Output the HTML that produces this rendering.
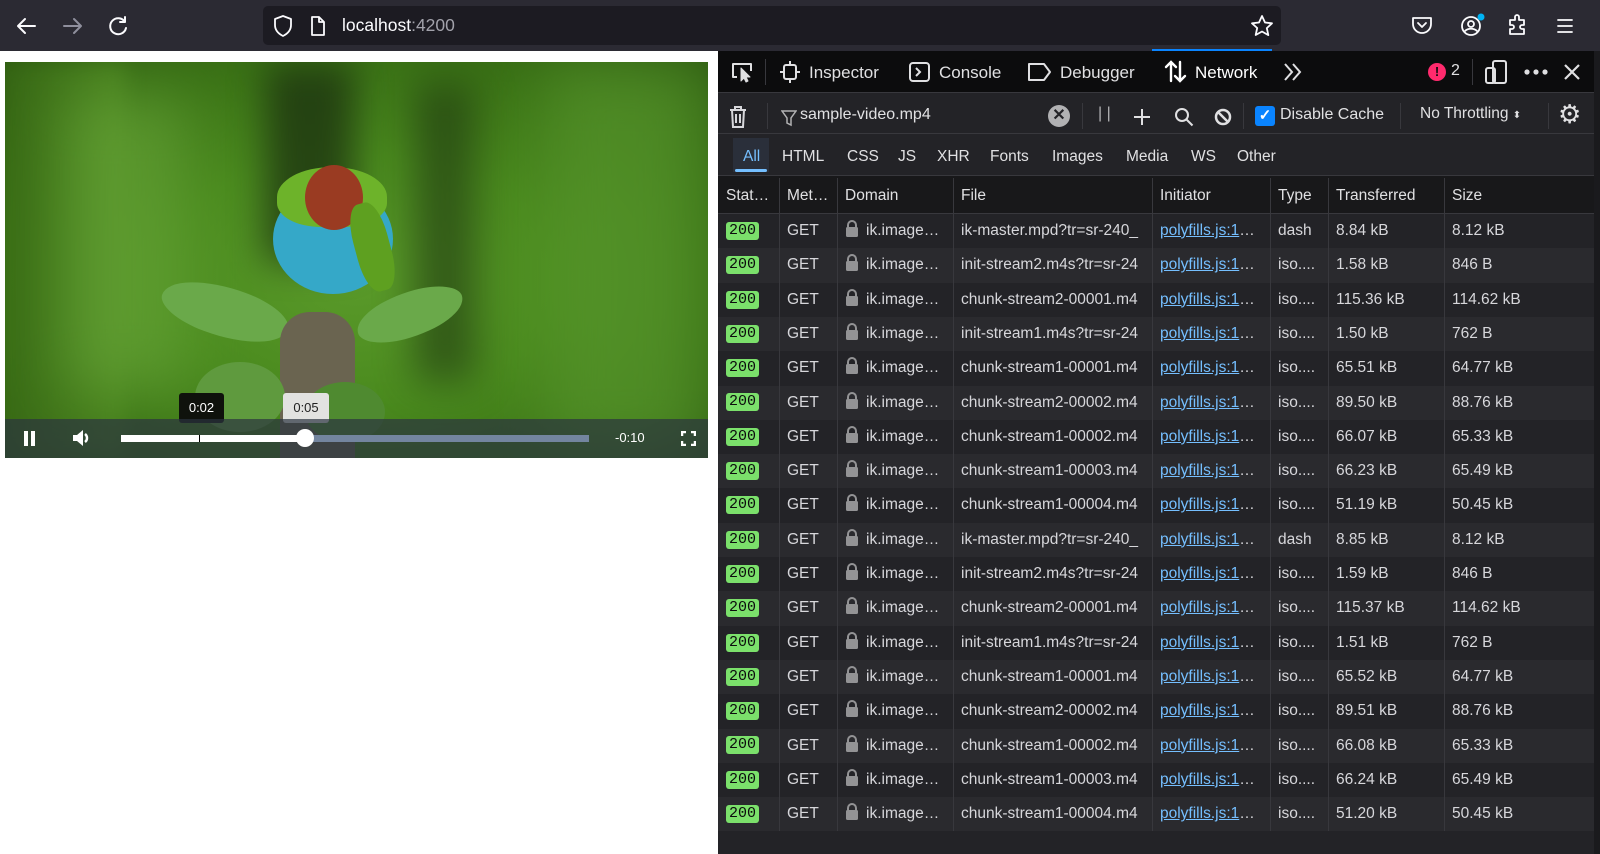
<!DOCTYPE html>
<html><head><meta charset="utf-8"><style>
*{box-sizing:border-box;margin:0;padding:0}
body{width:1600px;height:854px;overflow:hidden;background:#fff;font-family:"Liberation Sans",sans-serif;position:relative}
.a{position:absolute}
.top{left:0;top:0;width:1600px;height:51px;background:#2b2a33}
.url{left:263px;top:6px;width:1018px;height:39px;background:#1c1b22;border-radius:5px}
.dt{left:718px;top:51px;width:882px;height:803px;background:#232327;color:#e0e0e2;font-size:15.5px}
.t{position:absolute;white-space:nowrap}
.row{position:absolute;left:0;width:876px;height:34.3px}
.cell{position:absolute;top:0;height:100%;line-height:34px;white-space:nowrap;overflow:hidden;padding-left:8px;color:#d7d7db}
.badge{display:inline-block;background:#7be06b;color:#0c0c0d;font-family:"Liberation Mono",monospace;font-size:15px;line-height:18px;padding:0 3px;border-radius:3px;vertical-align:middle}
.lnk{color:#75bfff;text-decoration:underline}
.vl{position:absolute;top:0;width:1px;background:#38383d}
</style></head><body>
<div class="a top"></div>
<svg class="a" style="left:14px;top:14px" width="120" height="24" fill="none" stroke-width="2" stroke-linecap="round" stroke-linejoin="round">
<path d="M21 12H4M11 5l-7 7 7 7" stroke="#fbfbfe"/>
<path d="M50 12h17M60 5l7 7-7 7" stroke="#8f8f9d"/>
<path d="M111 8a8 8 0 1 0 1 6M111 3v5h-5" stroke="#fbfbfe"/>
</svg>
<div class="a url"></div>
<svg class="a" style="left:272px;top:14px" width="60" height="24" fill="none" stroke="#fbfbfe" stroke-width="1.8" stroke-linejoin="round">
<path d="M11 2l8 3v6c0 6-4 9-8 11-4-2-8-5-8-11V5z"/>
<path d="M40 3h7l5 5v13H40z M47 3v5h5"/>
</svg>
<div class="a" style="left:342px;top:15px;font-size:17.5px;color:#fbfbfe">localhost<span style="color:#a2a2ab">:4200</span></div>
<svg class="a" style="left:1250px;top:14px" width="24" height="24" fill="none" stroke="#fbfbfe" stroke-width="1.8" stroke-linejoin="round"><path d="M12 2l3 6.5 7 .8-5.2 4.8 1.5 7L12 17.5 5.7 21l1.5-7L2 9.3l7-.8z"/></svg>
<svg class="a" style="left:1410px;top:12px" width="180" height="28" fill="none" stroke="#fbfbfe" stroke-width="1.8" stroke-linecap="round" stroke-linejoin="round">
<path d="M3 6h18v6a9 9 0 0 1-18 0z M8 11l4 4 4-4"/>
<circle cx="61" cy="14" r="9"/><circle cx="61" cy="12" r="3"/><path d="M55 19c3-3 9-3 12 0"/>
<circle cx="71" cy="5" r="3.5" fill="#00b3f4" stroke="none"/>
<path d="M100 9h5V6a2 2 0 0 1 4 0v3h5v5h-2a2 2 0 0 0 0 4h2v5h-14v-5h2a2 2 0 0 0 0-4h-2z" transform="translate(0,-1)"/>
<path d="M148 8h14M148 14h14M148 20h14"/>
</svg>
<div class="a" style="left:1152px;top:49px;width:120px;height:3px;background:#0a84ff"></div>

<div class="a" style="left:5px;top:62px;width:703px;height:396px;overflow:hidden;background:radial-gradient(ellipse at 50% 55%,#5a9a2a 0%,#4a8a1e 40%,#3b7316 70%,#2f5d12 100%)">
<div class="a" style="left:0;top:0;width:120px;height:396px;background:linear-gradient(90deg,#3a6a16,#4f8a22);opacity:.7;filter:blur(10px)"></div>
<div class="a" style="left:260px;top:0;width:90px;height:200px;background:#1d3410;filter:blur(18px);opacity:.8"></div>
<div class="a" style="left:410px;top:20px;width:60px;height:300px;background:#1d3410;filter:blur(20px);opacity:.6"></div>
<div class="a" style="left:60px;top:30px;width:120px;height:300px;background:#6aa83a;filter:blur(30px);opacity:.6"></div>
<div class="a" style="left:540px;top:0;width:160px;height:396px;background:#5a9a2e;filter:blur(30px);opacity:.6"></div>
<div class="a" style="left:155px;top:225px;width:130px;height:50px;background:#6aa94a;border-radius:60% 40% 60% 40%;transform:rotate(20deg)"></div>
<div class="a" style="left:350px;top:230px;width:110px;height:45px;background:#6aa94a;border-radius:60% 40% 60% 40%;transform:rotate(-15deg)"></div>
<div class="a" style="left:275px;top:250px;width:75px;height:146px;background:#6a6450;border-radius:30px 30px 0 0"></div>
<div class="a" style="left:190px;top:300px;width:90px;height:70px;background:#5f9a3e;border-radius:50%"></div>
<div class="a" style="left:300px;top:320px;width:80px;height:60px;background:#4f8a30;border-radius:50%"></div>
<div class="a" style="left:268px;top:122px;width:120px;height:110px;background:#35a8c8;border-radius:50%"></div>
<div class="a" style="left:272px;top:105px;width:110px;height:60px;background:#6db32a;border-radius:50% 50% 40% 40%"></div>
<div class="a" style="left:300px;top:103px;width:58px;height:65px;background:#9a3b22;border-radius:50%"></div>
<div class="a" style="left:350px;top:140px;width:35px;height:90px;background:#5ea020;border-radius:40%;transform:rotate(-15deg)"></div>
<div class="a" style="left:174px;top:331px;width:45px;height:30px;background:#0f120c;border-radius:3px;color:#fff;font-size:13px;text-align:center;line-height:30px">0:02</div>
<div class="a" style="left:278px;top:331px;width:46px;height:30px;background:#e2e2e0;border-radius:3px;color:#222;font-size:13px;text-align:center;line-height:30px">0:05</div>
<div class="a" style="left:0;top:357px;width:703px;height:39px;background:rgba(43,51,63,.7)"></div>
<div class="a" style="left:19px;top:369px;width:4px;height:15px;background:#fff"></div>
<div class="a" style="left:26px;top:369px;width:4px;height:15px;background:#fff"></div>
<svg class="a" style="left:66px;top:366px" width="22" height="20"><path d="M2 7h4l6-5v16l-6-5H2z" fill="#fff"/><path d="M14 6a5 5 0 0 1 0 8" stroke="#fff" stroke-width="2.5" fill="none"/></svg>
<div class="a" style="left:116px;top:373px;width:468px;height:7px;background:#73859f"></div>
<div class="a" style="left:116px;top:373px;width:184px;height:7px;background:#fff"></div>
<div class="a" style="left:194px;top:373px;width:1px;height:7px;background:#000"></div>
<div class="a" style="left:291px;top:367px;width:18px;height:18px;border-radius:50%;background:#fff"></div>
<div class="a" style="left:610px;top:368px;color:#fff;font-size:13px">-0:10</div>
<svg class="a" style="left:676px;top:369px" width="15" height="15" fill="none" stroke="#fff" stroke-width="2.5"><path d="M1 5V1h4M10 1h4v4M14 10v4h-4M5 14H1v-4"/></svg>
</div>

<div class="a dt">
<div class="a" style="left:0;top:0;width:876px;height:42px;background:#0c0c0d;border-bottom:1px solid #38383d"></div>
<div class="a" style="left:876px;top:0;width:6px;height:803px;background:#1a1a1d"></div>
<svg class="a" style="left:10px;top:8px" width="30" height="26" fill="none" stroke="#e0e0e2" stroke-width="2" stroke-linejoin="round">
<path d="M9 18H5V5h18v7"/><path d="M13 9l9 9-4 0 2 4-2 1-2-4-3 3z" fill="#e0e0e2" stroke-width="1"/></svg>
<div class="a" style="left:47px;top:8px;width:1px;height:26px;background:#38383d"></div>
<svg class="a" style="left:59px;top:8px" width="26" height="26" fill="none" stroke="#e0e0e2" stroke-width="2" stroke-linejoin="round">
<rect x="7" y="6" width="12" height="14" rx="2"/><path d="M13 2v4M13 20v4M3 13h4M19 13h4"/></svg>
<div class="t" style="left:91px;top:12px;font-size:17px">Inspector</div>
<svg class="a" style="left:190px;top:9px" width="24" height="24" fill="none" stroke="#e0e0e2" stroke-width="2"><rect x="2" y="3" width="19" height="18" rx="3"/><path d="M8 8l4 4-4 4"/></svg>
<div class="t" style="left:221px;top:12px;font-size:17px">Console</div>
<svg class="a" style="left:309px;top:9px" width="26" height="24" fill="none" stroke="#e0e0e2" stroke-width="2" stroke-linejoin="round"><path d="M2 4h15l6 8-6 8H2z"/></svg>
<div class="t" style="left:342px;top:12px;font-size:17px">Debugger</div>
<svg class="a" style="left:445px;top:8px" width="26" height="26" fill="none" stroke="#fff" stroke-width="2.4" stroke-linecap="round"><path d="M8 22V3M3 8l5-5 5 5M17 3v19M12 17l5 5 5-5"/></svg>
<div class="t" style="left:477px;top:12px;font-size:17px;color:#fff">Network</div>
<svg class="a" style="left:563px;top:10px" width="24" height="22" fill="none" stroke="#e0e0e2" stroke-width="2"><path d="M4 3l7 8-7 8M12 3l7 8-7 8"/></svg>
<div class="a" style="left:710px;top:12px;width:18px;height:18px;border-radius:50%;background:#ff2a6d;color:#0c0c0d;font-weight:bold;font-size:13px;text-align:center;line-height:18px">!</div>
<div class="t" style="left:733px;top:11px;font-size:16px">2</div>
<div class="a" style="left:754px;top:8px;width:1px;height:26px;background:#38383d"></div>
<svg class="a" style="left:766px;top:8px" width="24" height="28" fill="none" stroke="#e0e0e2" stroke-width="2"><rect x="9" y="2" width="13" height="22" rx="2"/><rect x="2" y="9" width="9" height="15" rx="2"/></svg>
<svg class="a" style="left:805px;top:17px" width="28" height="8" fill="#e0e0e2"><circle cx="4" cy="4" r="2.6"/><circle cx="13" cy="4" r="2.6"/><circle cx="22" cy="4" r="2.6"/></svg>
<svg class="a" style="left:845px;top:12px" width="18" height="18" stroke="#e0e0e2" stroke-width="2.2"><path d="M2 2l14 14M16 2L2 16"/></svg>

<div class="a" style="left:0;top:42px;width:876px;height:41px;border-bottom:1px solid #38383d"></div>
<svg class="a" style="left:10px;top:54px" width="20" height="24" fill="none" stroke="#d7d7db" stroke-width="2"><path d="M2 5h16M7 5V2h6v3M4 5l1 17h10l1-17M8 9v9M12 9v9"/></svg>
<div class="a" style="left:49px;top:52px;width:1px;height:26px;background:#38383d"></div>
<svg class="a" style="left:63px;top:58px" width="16" height="18" fill="none" stroke="#b1b1b3" stroke-width="1.5"><path d="M1 2h14l-5 7v7l-4-2V9z"/></svg>
<div class="t" style="left:82px;top:55px;font-size:16px;color:#e0e0e2">sample-video.mp4</div>
<div class="a" style="left:330px;top:54px;width:22px;height:22px;border-radius:50%;background:#b1b1b3;color:#232327;text-align:center;line-height:22px;font-weight:bold;font-size:16px">✕</div>
<div class="a" style="left:364px;top:52px;width:1px;height:26px;background:#38383d"></div>
<div class="t" style="left:380px;top:54px;font-size:16px;color:#b1b1b3">| |</div>
<svg class="a" style="left:414px;top:56px" width="20" height="20" stroke="#e0e0e2" stroke-width="2"><path d="M10 2v16M2 10h16"/></svg>
<svg class="a" style="left:455px;top:55px" width="22" height="22" fill="none" stroke="#e0e0e2" stroke-width="2"><circle cx="9" cy="9" r="6"/><path d="M13.5 13.5l6 6"/></svg>
<svg class="a" style="left:495px;top:56px" width="20" height="20" fill="none" stroke="#e0e0e2" stroke-width="2.5"><circle cx="10" cy="10" r="7"/><path d="M5 5l10 10"/></svg>
<div class="a" style="left:525px;top:52px;width:1px;height:26px;background:#38383d"></div>
<div class="a" style="left:537px;top:55px;width:20px;height:20px;border-radius:3px;background:#0a84ff;color:#fff;font-size:15px;text-align:center;line-height:20px;font-weight:bold">✓</div>
<div class="t" style="left:562px;top:55px;font-size:16px">Disable Cache</div>
<div class="a" style="left:682px;top:52px;width:1px;height:26px;background:#38383d"></div>
<div class="t" style="left:702px;top:54px;font-size:15.5px">No Throttling <span style="font-size:10px">⬍</span></div>
<div class="a" style="left:830px;top:52px;width:1px;height:26px;background:#38383d"></div>
<div class="t" style="left:840px;top:48px;font-size:26px;color:#e0e0e2">⚙</div>

<div class="a" style="left:0;top:83px;width:876px;height:42px;border-bottom:1px solid #38383d"></div>
<div class="a" style="left:15px;top:87px;width:36px;height:34px;background:#2a2f3a"></div>
<div class="a" style="left:17px;top:118px;width:32px;height:3px;background:#75bfff;border-radius:2px"></div>
<div class="t" style="left:25px;top:97px;font-size:15.5px;color:#75bfff">All</div>
<div class="t" style="left:64px;top:97px;font-size:15.5px">HTML</div>
<div class="t" style="left:129px;top:97px;font-size:15.5px">CSS</div>
<div class="t" style="left:180px;top:97px;font-size:15.5px">JS</div>
<div class="t" style="left:219px;top:97px;font-size:15.5px">XHR</div>
<div class="t" style="left:272px;top:97px;font-size:15.5px">Fonts</div>
<div class="t" style="left:334px;top:97px;font-size:15.5px">Images</div>
<div class="t" style="left:408px;top:97px;font-size:15.5px">Media</div>
<div class="t" style="left:473px;top:97px;font-size:15.5px">WS</div>
<div class="t" style="left:519px;top:97px;font-size:15.5px">Other</div>

<div class="a" style="left:0;top:125px;width:876px;height:38px;background:#18181a;border-bottom:1px solid #38383d"></div>
<div id="tbl" class="a" style="left:0;top:127px;width:876px;height:660px"></div>
</div>
<script>
var cols=[0,61,119,235,434,552,610,726,876];
var hdr=["Stat…","Met…","Domain","File","Initiator","Type","Transferred","Size"];
var rows=[
["ik-master.mpd?tr=sr-240_","dash","8.84 kB","8.12 kB"],
["init-stream2.m4s?tr=sr-24","iso....","1.58 kB","846 B"],
["chunk-stream2-00001.m4","iso....","115.36 kB","114.62 kB"],
["init-stream1.m4s?tr=sr-24","iso....","1.50 kB","762 B"],
["chunk-stream1-00001.m4","iso....","65.51 kB","64.77 kB"],
["chunk-stream2-00002.m4","iso....","89.50 kB","88.76 kB"],
["chunk-stream1-00002.m4","iso....","66.07 kB","65.33 kB"],
["chunk-stream1-00003.m4","iso....","66.23 kB","65.49 kB"],
["chunk-stream1-00004.m4","iso....","51.19 kB","50.45 kB"],
["ik-master.mpd?tr=sr-240_","dash","8.85 kB","8.12 kB"],
["init-stream2.m4s?tr=sr-24","iso....","1.59 kB","846 B"],
["chunk-stream2-00001.m4","iso....","115.37 kB","114.62 kB"],
["init-stream1.m4s?tr=sr-24","iso....","1.51 kB","762 B"],
["chunk-stream1-00001.m4","iso....","65.52 kB","64.77 kB"],
["chunk-stream2-00002.m4","iso....","89.51 kB","88.76 kB"],
["chunk-stream1-00002.m4","iso....","66.08 kB","65.33 kB"],
["chunk-stream1-00003.m4","iso....","66.24 kB","65.49 kB"],
["chunk-stream1-00004.m4","iso....","51.20 kB","50.45 kB"]];
var h='';
function cell(i,c,extra){return '<div class="cell" style="left:'+cols[i]+'px;width:'+(cols[i+1]-cols[i])+'px;'+(extra||'')+'">'+c+'</div>';}
h+='<div class="row" style="top:0;height:36px">';
for(var i=0;i<8;i++)h+=cell(i,hdr[i],'line-height:36px;color:#e0e0e2');
h+='</div>';
var lock='<svg width="14" height="17" style="vertical-align:-2px;margin-right:7px"><path d="M3 8V5a4 4 0 0 1 8 0v3" stroke="#939395" stroke-width="2" fill="none"/><rect x="1" y="7" width="12" height="10" rx="1.5" fill="#939395"/></svg>';
for(var r=0;r<rows.length;r++){
 var d=rows[r];
 h+='<div class="row" style="top:'+(36+r*34.3)+'px;background:'+(r%2?'#2a2a2e':'#232327')+'">';
 h+=cell(0,'<span class="badge">200</span>');
 h+=cell(1,'GET');
 h+=cell(2,lock+'ik.image…');
 h+=cell(3,d[0]);
 h+=cell(4,'<span class="lnk">polyfills.js:1</span>…');
 h+=cell(5,d[1]);
 h+=cell(6,d[2]);
 h+=cell(7,d[3]);
 h+='</div>';
}
for(var i=1;i<8;i++)h+='<div class="vl" style="left:'+cols[i]+'px;height:'+(36+18*34.3)+'px"></div>';
document.getElementById('tbl').innerHTML=h;
</script>
</body></html>
